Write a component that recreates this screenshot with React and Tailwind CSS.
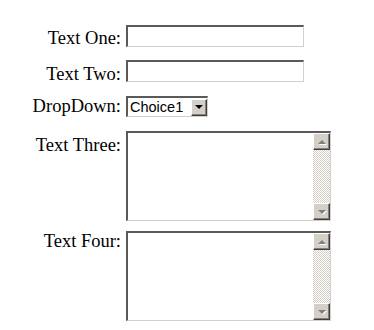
import React from "react";

const label = "w-[121px] shrink-0 text-right text-[18.5px] leading-[20px] text-black";

function Sunken({ className, children }) {
  return (
    <div
      className={
        "border-t-2 border-l-2 border-r border-b border-t-[#5a5a5a] border-l-[#5a5a5a] border-r-[#d4d0c8] border-b-[#d4d0c8] bg-white " +
        className
      }
    >
      {children}
    </div>
  );
}

function ScrollButton({ up }) {
  return (
    <div className="h-[17px] w-full shrink-0 flex items-center justify-center bg-[#d4d0c8] border border-t-white border-l-white border-r-[#404040] border-b-[#404040] shadow-[inset_-1px_-1px_#808080]">
      {up ? (
        <div className="w-0 h-0 border-l-[4px] border-r-[4px] border-b-[4px] border-l-transparent border-r-transparent border-b-[#808080] drop-shadow-[1px_1px_0_#ffffff]" />
      ) : (
        <div className="w-0 h-0 border-l-[4px] border-r-[4px] border-t-[4px] border-l-transparent border-r-transparent border-t-[#808080] drop-shadow-[1px_1px_0_#ffffff]" />
      )}
    </div>
  );
}

function TextArea() {
  return (
    <Sunken className="w-[205px] h-[90px] flex">
      <div className="flex-1" />
      <div className="w-[17px] flex flex-col">
        <ScrollButton up />
        <div className="flex-1 bg-[repeating-conic-gradient(#d4d0c8_0_25%,#ffffff_0_50%)] bg-[length:2px_2px]" />
        <ScrollButton />
      </div>
    </Sunken>
  );
}

export default function App() {
  return (
    <div
      className="min-h-[330px] w-[374px] bg-white pt-[25px] flex flex-col"
      style={{ fontFamily: '"Liberation Serif", "Times New Roman", serif' }}
    >
      {/* Text One */}
      <div className="flex items-start gap-[5px]">
        <div className={label + " pt-[3px]"}>Text One:</div>
        <Sunken className="w-[178px] h-[22px]" />
      </div>

      {/* Text Two */}
      <div className="flex items-start gap-[5px] mt-[12px]">
        <div className={label + " pt-[4px]"}>Text Two:</div>
        <Sunken className="w-[178px] h-[22px]" />
      </div>

      {/* DropDown */}
      <div className="flex items-start gap-[5px] mt-[12px]">
        <div className={label}>DropDown:</div>
        <div className="h-[21px] w-[82px] flex items-center border-t-2 border-l-2 border-r border-b border-t-[#5a5a5a] border-l-[#5a5a5a] border-r-[#d4d0c8] border-b-[#d4d0c8] bg-white">
          <span
            className="flex-1 pl-[2px] text-[14.5px] leading-[16px] text-black"
            style={{ fontFamily: '"Liberation Sans", Arial, sans-serif' }}
          >
            Choice1
          </span>
          <div className="h-[17px] w-[16px] flex items-center justify-center bg-[#d4d0c8] border border-t-white border-l-white border-r-[#404040] border-b-[#404040] shadow-[inset_-1px_-1px_#808080]">
            <div className="w-0 h-0 border-l-[4px] border-r-[4px] border-t-[4px] border-l-transparent border-r-transparent border-t-black" />
          </div>
        </div>
      </div>

      {/* Text Three */}
      <div className="flex items-start gap-[5px] mt-[14px]">
        <div className={label + " pt-[4px]"}>Text Three:</div>
        <TextArea />
      </div>

      {/* Text Four */}
      <div className="flex items-start gap-[5px] mt-[10px]">
        <div className={label + " pt-[0px]"}>Text Four:</div>
        <TextArea />
      </div>
    </div>
  );
}
